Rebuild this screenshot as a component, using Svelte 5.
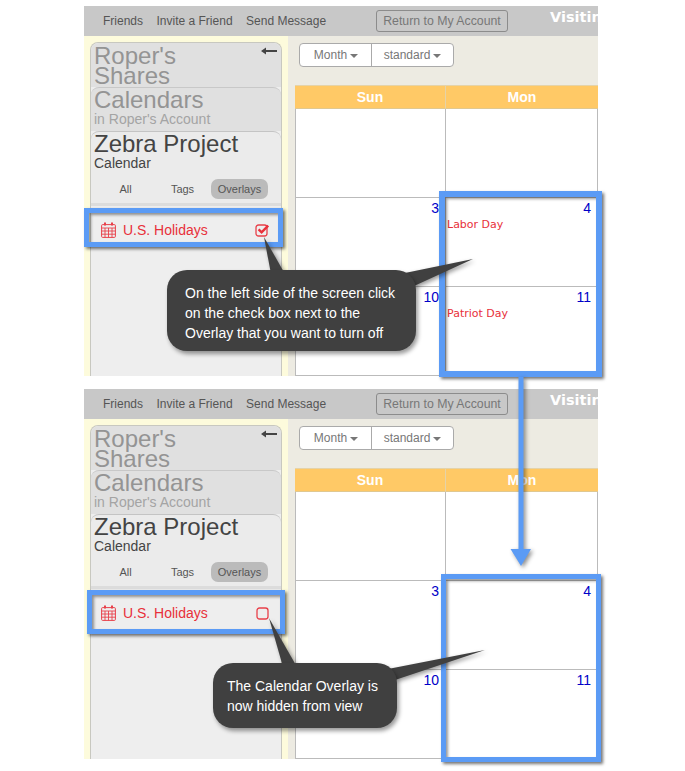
<script>
	let panels = [
		{ checked: true, events: { 4: "Labor Day", 11: "Patriot Day" } },
		{ checked: false, events: {} }
	]
	let rows = [
		[null, null],
		[3, 4],
		[10, 11]
	]
</script>

<div class="page">
	{#each panels as p}
		<section class="panel">
			<header class="topbar">
				<nav>
					<span>Friends</span>
					<span>Invite a Friend</span>
					<span>Send Message</span>
				</nav>
				<div class="return">Return to My Account</div>
				<div class="visiting">Visiting</div>
			</header>
			<div class="body">
				<aside>
					<div class="side">
						<div class="card first">
							<h2>Roper's<br>Shares</h2>
							<svg class="back" width="16" height="8" viewBox="0 0 16 8">
								<path d="M0 4 L5 0.5 V3 H16 V5 H5 V7.5 Z" fill="#444" />
							</svg>
						</div>
						<div class="card second">
							<h2>Calendars</h2>
							<p>in Roper's Account</p>
						</div>
						<div class="card third">
							<h2>Zebra Project</h2>
							<p>Calendar</p>
							<div class="tabs">
								<span>All</span>
								<span>Tags</span>
								<span class="on">Overlays</span>
							</div>
						</div>
						<div class="list">
							<div class="overlay-row">
								<svg width="15" height="16" viewBox="0 0 15 16" fill="none" stroke="#e8404a">
									<rect x="0.6" y="2.6" width="13.8" height="12.8" rx="1" />
									<path d="M0.6 6 H14.4 M0.6 9 H14.4 M0.6 12.2 H14.4 M4 6 V15.4 M7.5 6 V15.4 M11 6 V15.4" stroke-width="0.9" />
									<path d="M4 0.5 V3.5 M11 0.5 V3.5" stroke-width="2" />
								</svg>
								<span>U.S. Holidays</span>
								<svg class="check" class:off={!p.checked} width="15" height="14" viewBox="0 0 15 14" fill="none">
									<rect x="1" y="2" width="11" height="11" rx="2.5" stroke="#e8404a" stroke-width="1.3" />
									{#if p.checked}
										<path d="M3.6 6.4 L6.6 9.4 L13.2 2.6" stroke="#e8303a" stroke-width="2.4" />
									{/if}
								</svg>
							</div>
						</div>
					</div>
				</aside>
				<div class="main">
					<div class="toolbar">
						<div class="group">
							<span class="month">Month<i></i></span>
							<span class="std">standard<i></i></span>
						</div>
					</div>
					<div class="cal">
						<div class="head">Sun</div>
						<div class="head">Mon</div>
						{#each rows as row}
							{#each row as day}
								<div class="cell">
									{#if day}<div class="num">{day}</div>{/if}
									{#if p.events[day]}<div class="event">{p.events[day]}</div>{/if}
								</div>
							{/each}
						{/each}
					</div>
				</div>
			</div>
		</section>
	{/each}

	<!-- annotations drawn over the screenshots -->
	<div class="hl a1"></div>
	<div class="hl a2"></div>
	<div class="hl b1"></div>
	<div class="hl b2"></div>

	<svg class="marks" width="685" height="771" viewBox="0 0 685 771">
		<g class="arrow">
			<path d="M518.5 377 H523.5 V549 H531 L521 566 L510.5 549 H518.5 Z" fill="#5b9bf5" />
		</g>
		<g class="tails">
			<path d="M264 237 L271 274 L285 274 Z" fill="#404040" />
			<path d="M473 259 L400 274 L414 286 Z" fill="#404040" />
			<path d="M269 618 L283 667 L297 667 Z" fill="#404040" />
			<path d="M485 650 L388 669 L395 680 Z" fill="#404040" />
		</g>
	</svg>

	<div class="bubble ba">On the left side of the screen click<br>on the check box next to the<br>Overlay that you want to turn off</div>
	<div class="bubble bb">The Calendar Overlay is<br>now hidden from view</div>
</div>

<style>
	:global(body) {
		margin:0;
		background:#fff;
	}
	.page {
		position:relative;
		width:685px;
		height:771px;
		overflow:hidden;
		box-sizing:border-box;
		padding:6px 0 0 84px;
		display:flex;
		flex-direction:column;
		gap:13px;
		font-family:"Liberation Sans",Arial,sans-serif;
	}
	.panel {
		width:514px;
		height:370px;
		display:flex;
		flex-direction:column;
		flex:none;
	}
	.topbar {
		height:30px;
		flex:none;
		background:#c8c8c8;
		display:flex;
		align-items:center;
		position:relative;
		overflow:hidden;
		font-size:12px;
		color:#555;
		padding-left:19px;
	}
	nav {
		display:flex;
		gap:13.5px;
		width:273px;
		flex:none;
	}
	.return {
		width:130px;
		height:20px;
		border:1px solid #8c8c8c;
		border-radius:3px;
		color:#777;
		font-size:12.3px;
		display:flex;
		align-items:center;
		justify-content:center;
		flex:none;
	}
	.visiting {
		margin:-9px 0 0 42px;
		color:#fff;
		font-family:"DejaVu Sans",sans-serif;
		font-weight:bold;
		font-size:14.5px;
		white-space:nowrap;
	}
	.body {
		flex:1;
		display:flex;
		min-height:0;
	}
	aside {
		width:204px;
		flex:none;
		background:#fdfbdc;
		padding:6px 6px 0 6px;
		box-sizing:border-box;
	}
	.side {
		height:100%;
		background:#eeeeee;
		border:1px solid #c8c8c0;
		border-bottom:none;
		border-radius:8px 8px 0 0;
		box-sizing:border-box;
		display:flex;
		flex-direction:column;
	}
	.card {
		position:relative;
		padding:0 3px;
		flex:none;
		box-sizing:border-box;
	}
	.first,.second {
		background:#e0e0e0;
		color:#949494;
	}
	.first {
		height:44px;
		border-radius:8px 8px 0 0;
		padding-top:3px;
	}
	.second {
		height:44px;
		border-top:1px solid #c8c8c8;
		border-radius:8px 8px 0 0;
	}
	.third {
		height:75px;
		background:#ebebeb;
		border-top:1px solid #c4c4c4;
		border-bottom:3px solid #dcdcdc;
		border-radius:8px 8px 0 0;
		color:#444;
	}
	h2 {
		margin:0;
		font-size:24px;
		line-height:20px;
		font-weight:normal;
	}
	.second h2,.third h2 {
		padding-top:1px;
		line-height:21px;
	}
	.card p {
		margin:0;
		font-size:14px;
		line-height:17px;
	}
	.third p {
		margin-top:1px;
	}
	.second p {
		color:#a4a4a4;
		line-height:18px;
	}
	.back {
		position:absolute;
		top:4px;
		right:4px;
	}
	.tabs {
		display:grid;
		grid-template-columns:57px 57px 57px;
		margin:7px 0 0 3px;
		font-size:11px;
		color:#555;
		text-align:center;
		line-height:20px;
	}
	.tabs .on {
		background:#bbb;
		border-radius:7px;
	}
	.list {
		flex:1;
		background:#eee;
	}
	.overlay-row {
		display:flex;
		align-items:center;
		padding:16px 0 0 10px;
		color:#e8303a;
		font-size:14px;
	}
	.overlay-row span {
		margin-left:7px;
	}
	.check {
		margin-left:47px;
	}
	.check.off {
		margin-left:48px;
	}
	.main {
		flex:1;
		background:#edebe2;
		padding-left:7px;
		min-width:0;
	}
	.toolbar {
		height:49px;
		padding:7px 0 0 4px;
		box-sizing:border-box;
	}
	.group {
		display:inline-flex;
		height:24px;
		width:155px;
		background:#fff;
		border:1px solid #aaa;
		border-radius:4px;
		box-sizing:border-box;
		font-size:12px;
		color:#777;
	}
	.group span {
		display:flex;
		align-items:center;
		justify-content:center;
		gap:3px;
	}
	.month {
		width:72px;
		border-right:1px solid #aaa;
		padding-left:1px;
		box-sizing:border-box;
	}
	.std {
		flex:1;
	}
	.group i {
		width:0;
		height:0;
		border-left:4px solid transparent;
		border-right:4px solid transparent;
		border-top:4px solid #777;
		margin-top:1px;
	}
	.cal {
		display:grid;
		grid-template-columns:151px 152px;
		grid-template-rows:24px 89px 89px 89px;
		width:303px;
		background:#fff;
	}
	.head {
		background:#ffc966;
		color:#fff;
		font-weight:bold;
		font-size:14px;
		text-align:center;
		line-height:23px;
		border-top:1px solid #e5d3a8;
		border-bottom:1px solid #e0c890;
		box-sizing:border-box;
	}
	.head:first-child {
		border-right:1px solid #e5d3a8;
	}
	.cell {
		border-bottom:1px solid #bbb;
		border-right:1px solid #bbb;
		box-sizing:border-box;
		background:#fff;
	}
	.cell:nth-child(odd) {
		border-left:1px solid #bbb;
	}
	.num {
		color:#0000c8;
		font-size:14px;
		line-height:16px;
		text-align:right;
		padding:2px 6px 0 0;
	}
	.event {
		color:#e8303a;
		font-family:"DejaVu Sans",sans-serif;
		font-size:11px;
		line-height:14px;
		padding:2px 0 0 1px;
	}
	.hl {
		position:absolute;
		box-sizing:border-box;
		border:5px solid #5b9bf5;
		box-shadow:2px 2px 3px rgba(0,0,0,.55),inset 2px 2px 3px rgba(0,0,0,.4);
	}
	.a1 { left:84px; top:208px; width:199px; height:39px; }
	.a2 { left:439px; top:191px; width:163px; height:186px; border-width:6px; }
	.b1 { left:87px; top:590px; width:198px; height:44px; }
	.b2 { left:441px; top:574px; width:160px; height:188px; }
	.marks {
		position:absolute;
		left:0;
		top:0;
		overflow:visible;
	}
	.arrow {
		filter:drop-shadow(2px 2px 2px rgba(0,0,0,.45));
	}
	.tails {
		filter:drop-shadow(2px 2px 2px rgba(0,0,0,.4));
	}
	.bubble {
		position:absolute;
		box-sizing:border-box;
		background:#404040;
		color:#fff;
		border-radius:20px;
		font-size:14px;
		line-height:20px;
		box-shadow:2px 3px 4px rgba(0,0,0,.4);
		white-space:nowrap;
	}
	.ba { left:167px; top:270px; width:249px; height:81px; padding:13px 0 0 18px; }
	.bb { left:213px; top:663px; width:184px; height:65px; padding:13px 0 0 14px; }
</style>
